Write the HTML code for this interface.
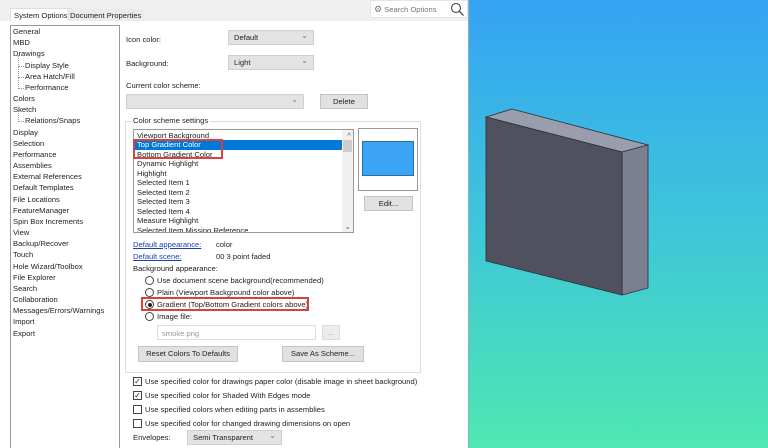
<!DOCTYPE html>
<html><head><meta charset="utf-8"><style>
*{margin:0;padding:0;box-sizing:border-box}
html,body{width:768px;height:448px;overflow:hidden}
body{position:relative;font-family:"Liberation Sans",sans-serif;font-size:7.6px;color:#222;background:linear-gradient(#35a3f4,#3fc9d6 55%,#4ee8b0)}
.a{position:absolute;white-space:nowrap}
#win{position:absolute;left:0;top:0;width:469px;height:448px;background:#fff;border-right:1px solid #9ab;overflow:hidden}
#top{position:absolute;left:0;top:0;width:469px;height:21px;background:#f0f0f0}
.dd{position:absolute;background:#e3e3e3;border:1px solid #cfcfcf;padding:1px 5px;height:15px;line-height:12px}
.dd:after{content:"⌄";position:absolute;right:5px;top:-1px;color:#777;font-size:8px}
.btn{position:absolute;background:#e1e1e1;border:1px solid #c4c4c4;text-align:center;line-height:14px}
.tree div{height:11.18px;line-height:11.18px}
.sub{padding-left:12px;position:relative}
.sub:before{content:"";position:absolute;left:5px;top:-5px;width:5px;height:11px;border-left:1px dotted #999;border-bottom:1px dotted #999}
.list div{height:9.55px;line-height:9.55px;padding-left:3px}
.rad{position:absolute;width:9px;height:9px;border:1px solid #444;border-radius:50%;background:#fff}
.chk{position:absolute;width:9px;height:9px;border:1px solid #444;background:#fff;font-size:8px;line-height:7px;text-align:center}
.lnk{color:#1a3fb0;text-decoration:underline}
.red{position:absolute;border:2px solid #d9413e;z-index:5}
</style></head><body>
<svg class="a" style="left:0;top:0" width="768" height="448">
<polygon points="486,117 512,109 648,145 622,152" fill="#9a9dab" stroke="#2a2e3a" stroke-width="0.8"/>
<polygon points="622,152 648,145 648,288 622,295" fill="#7c7f8f" stroke="#2a2e3a" stroke-width="0.8"/>
<polygon points="486,117 622,152 622,295 486,261" fill="#4f515f" stroke="#2a2e3a" stroke-width="0.8"/>
</svg>
<div id="win">
<div id="top"></div>
<div class="a" style="left:10px;top:8px;height:13px;background:#fff;border:1px solid #ddd;border-bottom:none;padding:2px 3px 0 3px">System Options</div>
<div class="a" style="left:67px;top:9px;height:12px;padding:2px 3px;background:#ebebeb">Document Properties</div>
<div class="a" style="left:370px;top:0;width:98px;height:18px;background:#fff;border:1px solid #e5e5e5;padding:3px 0 0 3px;color:#777"><span style="font-size:9px">⚙</span> Search Options</div>
<svg class="a" style="left:450px;top:2px" width="15" height="15"><circle cx="6" cy="6" r="4.5" fill="none" stroke="#555" stroke-width="1.2"/><line x1="9.3" y1="9.3" x2="13.5" y2="13.5" stroke="#555" stroke-width="1.4"/></svg>
<div class="a tree" style="left:10px;top:25px;width:110px;height:430px;border:1px solid #999;padding:0 0 0 2px">
<div>General</div><div>MBD</div><div>Drawings</div><div class="sub">Display Style</div><div class="sub">Area Hatch/Fill</div><div class="sub">Performance</div><div>Colors</div><div>Sketch</div><div class="sub">Relations/Snaps</div><div>Display</div><div>Selection</div><div>Performance</div><div>Assemblies</div><div>External References</div><div>Default Templates</div><div>File Locations</div><div>FeatureManager</div><div>Spin Box Increments</div><div>View</div><div>Backup/Recover</div><div>Touch</div><div>Hole Wizard/Toolbox</div><div>File Explorer</div><div>Search</div><div>Collaboration</div><div>Messages/Errors/Warnings</div><div>Import</div><div>Export</div>
</div>
<div class="a" style="left:126px;top:35px">Icon color:</div>
<div class="dd" style="left:228px;top:30px;width:86px">Default</div>
<div class="a" style="left:126px;top:59px">Background:</div>
<div class="dd" style="left:228px;top:55px;width:86px">Light</div>
<div class="a" style="left:126px;top:81px">Current color scheme:</div>
<div class="dd" style="left:126px;top:94px;width:178px"></div>
<div class="btn" style="left:320px;top:94px;width:48px;height:15px">Delete</div>
<div class="a" style="left:125px;top:121px;width:296px;height:252px;border:1px solid #ddd"></div>
<div class="a" style="left:131px;top:116px;background:#fff;padding:0 2px">Color scheme settings</div>
<div class="a list" style="left:133px;top:129px;width:221px;height:104px;border:1px solid #999;background:#fff;padding-top:0.5px;overflow:hidden">
<div>Viewport Background</div><div style="background:#0078d7;color:#fff;margin-right:11px">Top Gradient Color</div><div>Bottom Gradient Color</div><div>Dynamic Highlight</div><div>Highlight</div><div>Selected Item 1</div><div>Selected Item 2</div><div>Selected Item 3</div><div>Selected Item 4</div><div>Measure Highlight</div><div>Selected Item Missing Reference</div>
<div class="a" style="right:0;top:0;width:11px;height:103px;background:#f0f0f0"></div>
<div class="a" style="right:1px;top:10px;width:9px;height:12px;background:#cdcdcd"></div>
<div class="a" style="right:2px;top:1px;color:#555">^</div>
<div class="a" style="right:2px;top:92px;color:#555">⌄</div>
</div>
<div class="red" style="left:133px;top:139px;width:90px;height:20px"></div>
<div class="a" style="left:358px;top:128px;width:60px;height:63px;border:1px solid #999;background:#fff"></div>
<div class="a" style="left:362px;top:141px;width:52px;height:35px;background:#3ba4f4;border:1px solid #2f6f9f"></div>
<div class="btn" style="left:364px;top:196px;width:49px;height:15px">Edit...</div>
<div class="a lnk" style="left:133px;top:240px">Default appearance:</div>
<div class="a" style="left:216px;top:240px">color</div>
<div class="a lnk" style="left:133px;top:252px">Default scene:</div>
<div class="a" style="left:216px;top:252px">00 3 point faded</div>
<div class="a" style="left:133px;top:264px">Background appearance:</div>
<div class="rad" style="left:145px;top:276px"></div><div class="a" style="left:157px;top:276px">Use document scene background(recommended)</div>
<div class="rad" style="left:145px;top:288px"></div><div class="a" style="left:157px;top:288px">Plain (Viewport Background color above)</div>
<div class="rad" style="left:145px;top:300px"><div style="position:absolute;left:1.5px;top:1.5px;width:4px;height:4px;border-radius:50%;background:#222"></div></div><div class="a" style="left:157px;top:300px">Gradient (Top/Bottom Gradient colors above)</div>
<div class="red" style="left:141px;top:297px;width:168px;height:14px"></div>
<div class="rad" style="left:145px;top:312px"></div><div class="a" style="left:157px;top:312px">Image file:</div>
<div class="a" style="left:157px;top:325px;width:159px;height:15px;border:1px solid #ddd;color:#999;padding:3px 4px">smoke.png</div>
<div class="btn" style="left:322px;top:325px;width:18px;height:15px;color:#999;border-color:#ddd;background:#ececec">...</div>
<div class="btn" style="left:138px;top:346px;width:100px;height:16px">Reset Colors To Defaults</div>
<div class="btn" style="left:282px;top:346px;width:82px;height:16px">Save As Scheme...</div>
<div class="chk" style="left:133px;top:377px">✓</div><div class="a" style="left:145px;top:377px">Use specified color for drawings paper color (disable image in sheet background)</div>
<div class="chk" style="left:133px;top:391px">✓</div><div class="a" style="left:145px;top:391px">Use specified color for Shaded With Edges mode</div>
<div class="chk" style="left:133px;top:405px"></div><div class="a" style="left:145px;top:405px">Use specified colors when editing parts in assemblies</div>
<div class="chk" style="left:133px;top:419px"></div><div class="a" style="left:145px;top:419px">Use specified color for changed drawing dimensions on open</div>
<div class="a" style="left:133px;top:433px">Envelopes:</div>
<div class="dd" style="left:187px;top:430px;width:95px">Semi Transparent</div>
</div>
</body></html>
